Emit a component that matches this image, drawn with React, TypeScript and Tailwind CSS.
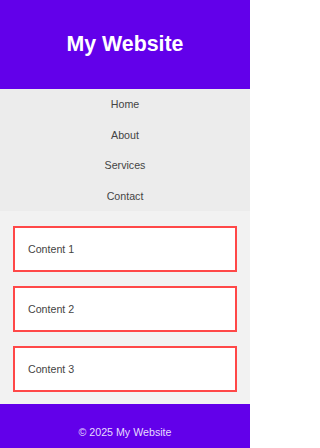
const navItems = ["Home", "About", "Services", "Contact"];
const contents = ["Content 1", "Content 2", "Content 3"];

const App = () => {
  return (
    <div className="w-[250px] font-['Liberation_Sans',Arial,sans-serif] text-[10.67px] text-[#333]">
      <header className="h-[89px] flex items-center justify-center bg-[#6200ea]">
        <h1 className="text-[21.33px] font-bold text-white">My Website</h1>
      </header>
      <nav className="bg-[#ececec] flex flex-col">
        {navItems.map((item) => (
          <a
            key={item}
            href="#"
            className="h-[30.5px] flex items-center justify-center text-[#444]"
          >
            {item}
          </a>
        ))}
      </nav>
      <main className="bg-[#f2f2f2] px-[13px] pt-[15px] pb-[12px] flex flex-col gap-[14px]">
        {contents.map((c) => (
          <div
            key={c}
            className="h-[46px] bg-white border-2 border-[#ff4848] flex items-center px-[13px] text-[#444]"
          >
            {c}
          </div>
        ))}
      </main>
      <footer className="h-[56px] flex items-center justify-center bg-[#6200ea] text-[#e6dcff]">
        © 2025 My Website
      </footer>
    </div>
  );
};

export default App;
